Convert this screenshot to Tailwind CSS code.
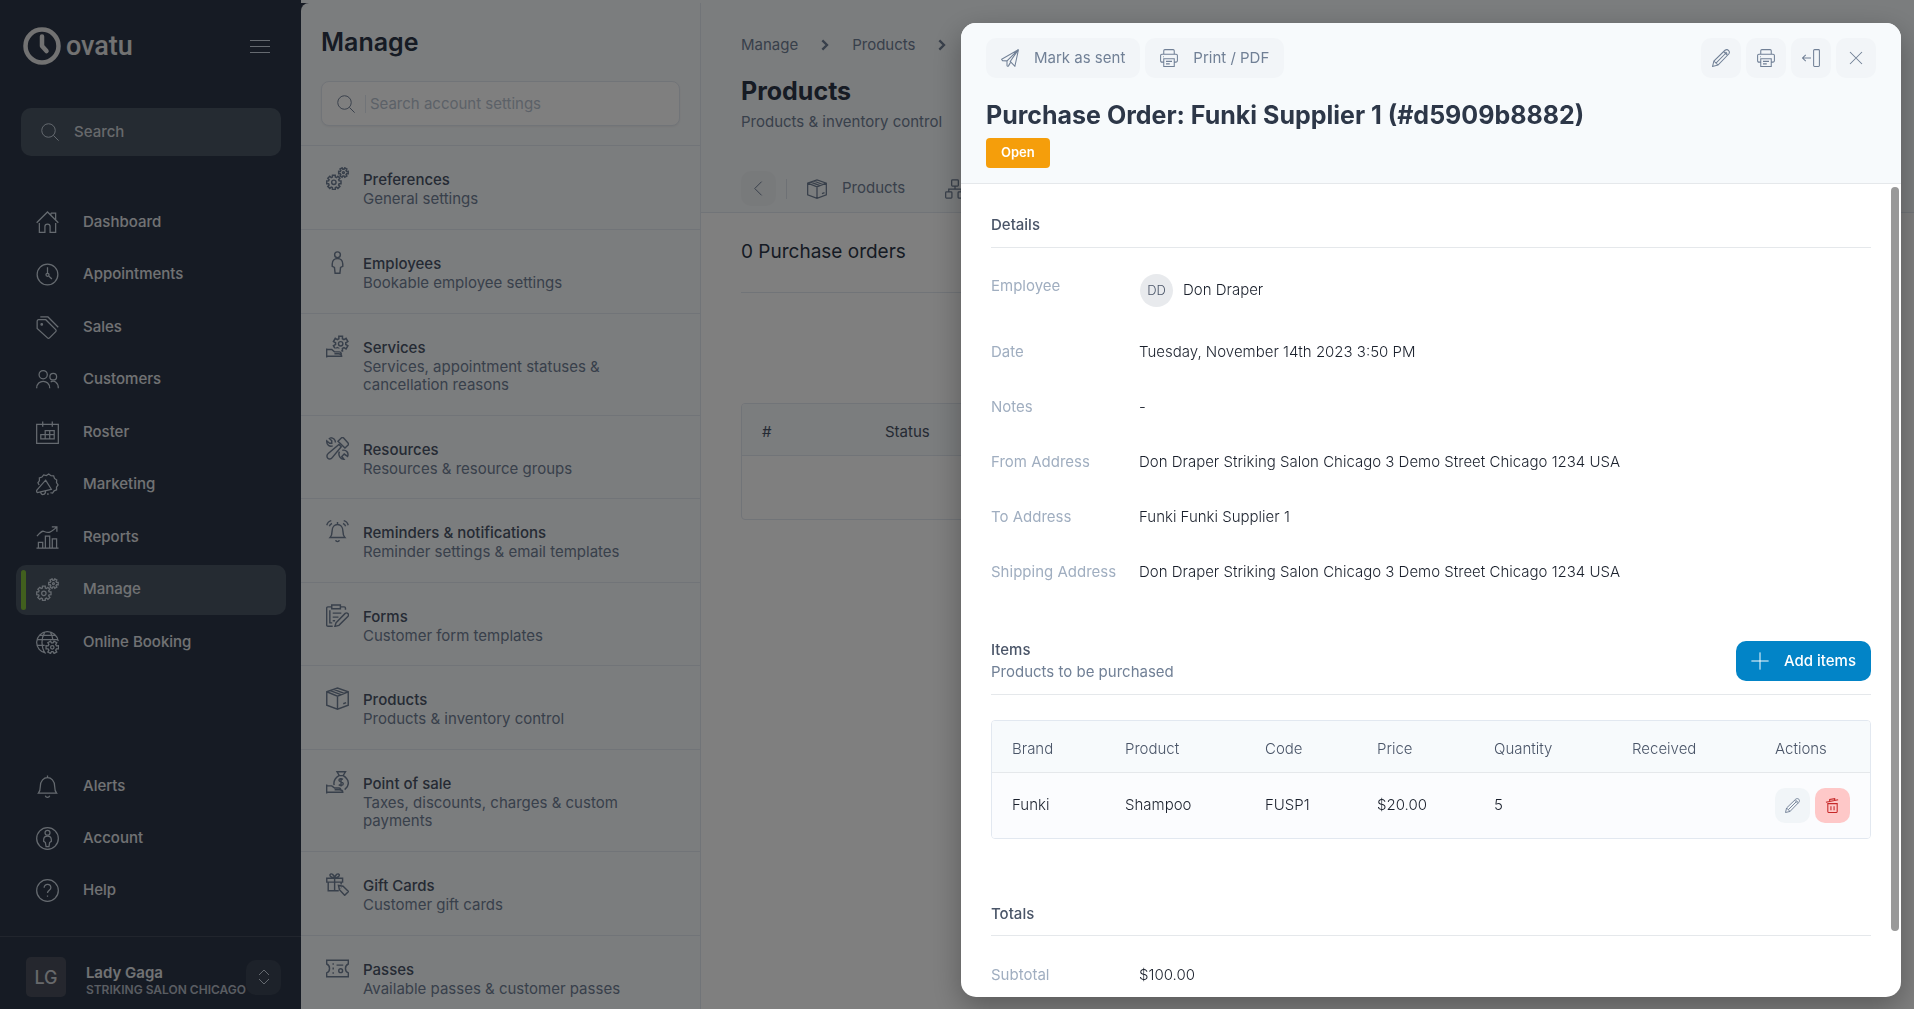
<!DOCTYPE html>
<html lang="en">
<head>
  <meta charset="UTF-8" />
  <meta name="viewport" content="width=device-width, initial-scale=1.0" />
  <title>Purchase Order - Ovatu</title>
  <script src="https://cdn.jsdelivr.net/npm/@tailwindcss/browser@4"></script>
</head>
<body class="flex h-screen overflow-hidden bg-[#2d3748] font-[Inter,sans-serif] text-[15px] text-[#4a5568]">

  <!-- icon sprite -->
  <svg class="hidden" aria-hidden="true">
    <defs>
      <path id="gear8" vector-effect="non-scaling-stroke" d="M5.77-1.65 7.85-1.53V1.53L5.77 1.65 5.25 2.91 6.63 4.47 4.47 6.63 2.91 5.25 1.65 5.77 1.53 7.85H-1.53L-1.65 5.77-2.91 5.25-4.47 6.63-6.63 4.47-5.25 2.91-5.77 1.65-7.85 1.53V-1.53L-5.77-1.65-5.25-2.91-6.63-4.47-4.47-6.63-2.91-5.25-1.65-5.77-1.53-7.85H1.53L1.65-5.77 2.91-5.25 4.47-6.63 6.63-4.47 5.25-2.91Z" />
      <path id="gear6" vector-effect="non-scaling-stroke" d="M5.17-1.88 7.76-1.94V1.94L5.17 1.88 4.21 3.54 5.56 5.75 2.2 7.69.96 5.42-.96 5.42-2.2 7.69-5.56 5.75-4.21 3.54-5.17 1.88-7.76 1.94V-1.94L-5.17-1.88-4.21-3.54-5.56-5.75-2.2-7.69-.96-5.42.96-5.42 2.2-7.69 5.56-5.75 4.21-3.54Z" />
    </defs>
    <symbol id="i-search" viewBox="0 0 24 24"><circle cx="10" cy="10" r="9" /><path d="m16.5 16.5 7 7" /></symbol>
    <symbol id="i-home" viewBox="0 0 24 24"><path d="M.7 12.3 12 1l11.300 11.300M3.500 12.500v9.800h5.800v-6c0-3.400 5.400-3.400 5.400 0v6h5.800v-9.800M15.500 2.300h5v6.800M15.500 2.300v2" /></symbol>
    <symbol id="i-clock" viewBox="0 0 24 24"><circle cx="12" cy="12" r="10.800" /><circle cx="12" cy="12.300" r="1.600" /><path d="M12 4.500v6M13.200 13.500l3.400 3.200" /></symbol>
    <symbol id="i-tags" viewBox="0 0 24 24"><path d="M1.200 5.500c0-1 .6-1.600 1.600-1.600h7.400l10.400 10.300c.6.6.6 1.500 0 2.100l-6.500 6.500c-.6.6-1.500.6-2.100 0L1.200 13zM4.500 1h8l10.700 10.800" /><circle cx="6" cy="8.800" r=".8" /></symbol>
    <symbol id="i-users" viewBox="0 0 24 24"><circle cx="7.500" cy="7" r="4.300" /><path d="M.7 21c0-9.500 13.600-9.500 13.600 0" /><circle cx="18" cy="9" r="3.500" /><path d="M15.300 14.600c3-2 8 0 8 6.400" /></symbol>
    <symbol id="i-roster" viewBox="0 0 24 24"><path d="M.7 3.500h22.600v19.800H.7zM7 .5V6M17 .5V6M5 14.300h14v4.400H5zM9.600 10h9.400v8.700H9.600zM14.300 10v8.700" /></symbol>
    <symbol id="i-marketing" viewBox="0 0 24 24"><path d="M3.300 12.500 2 10.300 3.600 8 3.500 5.200 6.200 4.200 8 2l2.800.6L13.300 1l2.300 1.800 2.800.2.900 2.700 2.300 1.600-.2 2.800L23 12.500l-1.600 2.300.1 2.800-2.600 1L17.300 21l-2.300-.4M10 7.500l6 9.500-14.500 3.500c-1.300-.8-.9-2.300-.4-2.900zM5 20c0 3.500 5 3.400 5-1.200M12.500 23l-.2-2" /></symbol>
    <symbol id="i-reports" viewBox="0 0 24 24"><path d="M.5 23.200h23M2.500 23v-6H7v6M9.800 23V10.500h4.500V23M17 23v-9.500h4.500V23M1 10.500c3-3.500 5-5.800 7.500-4.800 5 2 6.500 1.500 13-4.500M16.500 1h5.300v5" /></symbol>
    <symbol id="i-cogs" viewBox="0 0 24 24"><use href="#gear8" transform="translate(8.200 16) scale(.95)" /><circle cx="8.200" cy="16" r="2.300" /><use href="#gear6" transform="translate(18.200 5.800) scale(.64)" /><circle cx="18.200" cy="5.800" r="1" /></symbol>
    <symbol id="i-globe" viewBox="0 0 24 24"><path d="M10.500 23.200A11.300 11.300 0 1 1 23.200 10.500M1 9h21.500M1.200 15H9M4 4.500h16M9 1.200C5.500 8 5.500 16 9 22.800M15 1.200c1.500 2.500 2.200 5 2.500 7.500" /><use href="#gear6" transform="translate(17 17) scale(.84)" /><circle cx="17" cy="17" r="1.800" /></symbol>
    <symbol id="i-bell" viewBox="0 0 24 24"><path d="M12 .5v2.200M4.500 12c0-12.400 15-12.400 15 0 0 4 .8 5.500 2 7h-19c1.200-1.500 2-3 2-7zM9.700 21.700c.8 2.200 3.800 2.200 4.600 0" /></symbol>
    <symbol id="i-account" viewBox="0 0 24 24"><circle cx="12" cy="12" r="11.300" /><circle cx="12" cy="6" r="2.600" /><path d="M8 15v-1.500c0-5.300 8-5.300 8 0V15l-1.800 1.200-.7 4.300h-3l-.7-4.300z" /></symbol>
    <symbol id="i-help" viewBox="0 0 24 24"><circle cx="12" cy="12" r="11.300" /><path d="M8.500 9c0-4.500 7-4.300 7 0 0 2.700-3.500 2.700-3.500 5.600M12 17.300v1.200" /></symbol>
    <symbol id="i-person" viewBox="0 0 24 24"><circle cx="12" cy="3.900" r="3" /><path d="M6.500 16v-2.500C6.500 6 17.500 6 17.500 13.500V16l-2.300 1.200-.7 6h-5l-.7-6z" /></symbol>
    <symbol id="i-service" viewBox="0 0 24 24"><use href="#gear6" transform="translate(15.300 9) rotate(30) scale(.98)" /><circle cx="15.300" cy="9.200" r="2.300" /><path stroke="none" fill="#f7fafc" d="M0 14h15l3 9H0z" /><path d="M.7 14v9.500M.7 15.200H6l2.800 2.400H14c1.800 0 2.300 2.200 1.500 2.700M8.800 19.500H13c2 0 3.300 1.300 3.300 2.700H.7" /></symbol>
    <symbol id="i-tools" viewBox="0 0 24 24"><path d="M2.300 17.200 13.500 7.800l2.400 2.400L6.500 21.500c-1.500 2-3.500 1.800-4.600.7s-1.500-3.500.4-5zM12.500 4.500l3.700-3.700c.8-.5 1.600-.3 2.200.3L22.800 6c.7.800.7 2 0 2.700l-3 2.800zM3 1l3 3v2.500H3.800L.8 4C.3 8.500 4 10.500 7 9.300M9.800 5.800C10 3 7.500.5 4.500.8M14 15.300c-1.700 3.800 1 7.800 4.800 8l-2.300-3 2.500-2.500 3.500 2.500c1.700-4-2-7.600-5.500-6.300" /></symbol>
    <symbol id="i-ring" viewBox="0 0 24 24"><path d="M12 2v2.200M6.300 12c0-9.800 11.400-9.800 11.400 0 0 3.500.7 4.900 2 6.300H4.300c1.300-1.400 2-2.800 2-6.300zM10 21.200c.6 1.800 3.400 1.800 4 0M.8 5.500C1.500 3 3.200 1.200 5.500.7M3.500 6.500C4 5 5 4 6.300 3.600M23.200 5.500C22.500 3 20.800 1.200 18.500.7M20.500 6.500C20 5 19 4 17.700 3.600" /></symbol>
    <symbol id="i-forms" viewBox="0 0 24 24"><path d="M6 3H2C1.200 3 .7 3.500.7 4.300v17.600c0 .8.500 1.300 1.300 1.300h5M15 3h4c.8 0 1.300.5 1.300 1.300V6M6 1h9v4H6zM4 6.500v13.200h2.500M7 9.500h9M7 13.700h6M7 17.500h2.500M10.500 19.500 20 9.800c2-1.500 4.500.8 3 3l-9.500 9.500-4.200 1z" /></symbol>
    <symbol id="i-box" viewBox="0 0 24 24"><path d="M.8 5 12 1l11.200 4v14L12 23.200.8 19zM.8 5 12 9.500 23.200 5M12 9.500v13.700M4.500 3.700 15.500 8M8 2.400l11 4.200M18 17.500l3-1.200" /></symbol>
    <symbol id="i-money" viewBox="0 0 24 24"><path d="M11.500.8h8.800l-2.400 4h-4zM13.500 4.800c-4.500 3-6 6-5 10M18 4.800c6.500 4 7 10.500 1.500 14.700M17.700 8.800c-1.800-1.300-4.200-.8-4.200.9 0 2.200 4.500 1.200 4.500 3.600 0 2-2.900 2.300-4.700.9M15.700 7.300v9M.7 14v9.500M.7 15.500H6l3 2.300h4.500c1.500 0 2 1.200 1.500 2M9 19.500h5c2 0 3.500 1.200 3.500 2.700H.7" /></symbol>
    <symbol id="i-gift" viewBox="0 0 24 24"><path d="M.8 5.500h16.500v4H.8zM2.300 9.500v9h11M9 5.500v13M9 5.500C7.500 5 3.500 4 4.200 1.800 5.500-.5 8.500 2 9 5.500c.5-3.500 3.500-6 4.800-3.700C14.500 4 10.500 5 9 5.500M15.800 9.500V12M13 13l1 4.500 5.500 5.800 4-4-5.700-5.500zM15.500 15.500l.3.300" /></symbol>
    <symbol id="i-ticket" viewBox="0 0 24 24"><path d="M.7 3.300h22.600v4c-4 1.500-4 7.600 0 9.300v4H.7v-4c4-1.700 4-7.800 0-9.300zM7.500 6.500V8M7.500 11v2M7.500 16v1.500M11 8.500h7" /><circle cx="15.300" cy="14.300" r="2" /></symbol>
    <symbol id="i-sitemap" viewBox="0 0 24 24"><rect x="8" y="1" width="8" height="7.500" rx="1" /><rect x=".8" y="15.500" width="7.500" height="7.500" rx="1" /><rect x="15.700" y="15.500" width="7.500" height="7.500" rx="1" /><path d="M12 8.500V12M4.500 15.500V12h15v3.500" /></symbol>
    <symbol id="i-plane" viewBox="0 0 24 24"><path d="M23.300.7 18.500 23l-6.200-6.500L23.300.7.8 13.700 2 15.500l6 .3L23.300.7M8 15.800V22c0 1.200 1.300 1.500 2 .5l2.900-5" /></symbol>
    <symbol id="i-printer" viewBox="0 0 24 24"><path d="M5 17.500H2.500c-1 0-1.700-.7-1.700-1.700V8.700C.8 7.600 1.600 7 2.500 7h19c1 0 1.700.7 1.700 1.700v7.100c0 1-.7 1.700-1.700 1.700H19M5 7V2.300C5 1.300 5.700.8 6.500.8h11c.9 0 1.500.6 1.500 1.500V7M5 13h14v10.200H5zM8 16.500h8M8 19.800h5M4 10.200h1" /></symbol>
    <symbol id="i-pencil" viewBox="0 0 24 24"><path d="M.8 23.200 2.500 16 17.300 1.700c3.800-2.500 7.500 1.700 5 5L8 21.500zM2.500 16l5.500 5.500M15.500 3.500l5 5M18 3.800l2.300 2.300M5.300 18.700 18 6" /></symbol>
    <symbol id="i-dock" viewBox="0 0 24 24"><rect x="15.500" y=".8" width="7.700" height="22.400" rx="1.200" /><path d="M12 12H.8M5 7.800.8 12 5 16.200" /></symbol>
    <symbol id="i-close" viewBox="0 0 24 24"><path d="m4 4 16 16M20 4 4 20" /></symbol>
    <symbol id="i-plus" viewBox="0 0 24 24"><path d="M12 .5v23M.5 12h23" /></symbol>
    <symbol id="i-trash" viewBox="0 0 24 24"><path d="M4.500 9h15v12.500c0 1-.7 1.700-1.700 1.700H6.200c-1 0-1.700-.7-1.700-1.700zM9.500 13v6.500M14.500 13v6.500M1.500 6.700 21 2.700M7.500 5.300V2.500L15.500 1v2.600" /></symbol>
    <symbol id="i-left" viewBox="0 0 24 24"><path d="M17 1 6 12l11 11" /></symbol>
    <symbol id="i-right" viewBox="0 0 12 18"><path d="m2 2 7 7-7 7" /></symbol>
  </svg>

  <!-- sidebar -->
  <aside class="flex w-[301px] shrink-0 flex-col bg-[#2d3748] text-[#e2e5e8]">
    <div class="flex items-center justify-between pt-[26px] pr-[31px] pl-[22px]">
      <a href="#" class="flex items-center gap-1 text-[#e4e4e4]">
        <svg class="size-10" viewBox="0 0 40 40" fill="none" stroke="currentColor"><circle cx="20" cy="20" r="16.500" stroke-width="4.500" /><path d="M20 10.500v9.500l4.500 5" stroke-width="4.500" stroke-linecap="round" stroke-linejoin="round" /></svg>
        <span class="font-[Roboto,sans-serif] text-[27px] leading-10 font-medium">ovatu</span>
      </a>
      <button type="button" aria-label="Toggle menu" class="flex w-5 flex-col gap-[5px]">
        <span class="h-px w-full bg-[#cbd5e0]"></span>
        <span class="h-px w-full bg-[#cbd5e0]"></span>
        <span class="h-px w-full bg-[#cbd5e0]"></span>
      </button>
    </div>

    <label class="mr-5 ml-[21px] mt-[42px] flex h-12 items-center gap-[15px] rounded-[10px] bg-[#4a5664] pl-5">
      <svg class="size-[18px] shrink-0" fill="none" stroke="#cbd5e0" stroke-width="1.300"><use href="#i-search" /></svg>
      <input type="text" placeholder="Search" aria-label="Search" class="w-full bg-transparent font-medium outline-none placeholder:text-[#cfd3d8]" />
    </label>

    <nav class="mt-[41px] flex h-[470px] flex-col justify-between pr-[15px] pl-4 font-medium">
      <a href="#" class="flex h-[50px] items-center gap-6 rounded-[10px] pl-5"><svg class="size-[23px]" fill="none" stroke="#cbd5e0" stroke-width="1.300"><use href="#i-home" /></svg>Dashboard</a>
      <a href="#" class="flex h-[50px] items-center gap-6 rounded-[10px] pl-5"><svg class="size-[23px]" fill="none" stroke="#cbd5e0" stroke-width="1.300"><use href="#i-clock" /></svg>Appointments</a>
      <a href="#" class="flex h-[50px] items-center gap-6 rounded-[10px] pl-5"><svg class="size-[23px]" fill="none" stroke="#cbd5e0" stroke-width="1.300"><use href="#i-tags" /></svg>Sales</a>
      <a href="#" class="flex h-[50px] items-center gap-6 rounded-[10px] pl-5"><svg class="size-[23px]" fill="none" stroke="#cbd5e0" stroke-width="1.300"><use href="#i-users" /></svg>Customers</a>
      <a href="#" class="flex h-[50px] items-center gap-6 rounded-[10px] pl-5"><svg class="size-[23px]" fill="none" stroke="#cbd5e0" stroke-width="1.300"><use href="#i-roster" /></svg>Roster</a>
      <a href="#" class="flex h-[50px] items-center gap-6 rounded-[10px] pl-5"><svg class="size-[23px]" fill="none" stroke="#cbd5e0" stroke-width="1.300"><use href="#i-marketing" /></svg>Marketing</a>
      <a href="#" class="flex h-[50px] items-center gap-6 rounded-[10px] pl-5"><svg class="size-[23px]" fill="none" stroke="#cbd5e0" stroke-width="1.300"><use href="#i-reports" /></svg>Reports</a>
      <a href="#" aria-current="page" class="flex h-[50px] items-center rounded-[10px] bg-[#4a5664] pl-[5px]"><span class="mr-[10px] h-10 w-[5px] rounded-[3px] bg-[#82be3c]"></span><svg class="mr-6 size-[23px]" fill="none" stroke="#cbd5e0" stroke-width="1.300"><use href="#i-cogs" /></svg>Manage</a>
      <a href="#" class="flex h-[50px] items-center gap-6 rounded-[10px] pl-5"><svg class="size-[23px]" fill="none" stroke="#cbd5e0" stroke-width="1.300"><use href="#i-globe" /></svg>Online Booking</a>
    </nav>

    <nav class="mt-auto mb-[21px] flex flex-col gap-[2px] pr-[15px] pl-4 font-medium">
      <a href="#" class="flex h-[50px] items-center gap-6 pl-5"><svg class="size-[23px]" fill="none" stroke="#cbd5e0" stroke-width="1.300"><use href="#i-bell" /></svg>Alerts</a>
      <a href="#" class="flex h-[50px] items-center gap-6 pl-5"><svg class="size-[23px]" fill="none" stroke="#cbd5e0" stroke-width="1.300"><use href="#i-account" /></svg>Account</a>
      <a href="#" class="flex h-[50px] items-center gap-6 pl-5"><svg class="size-[23px]" fill="none" stroke="#cbd5e0" stroke-width="1.300"><use href="#i-help" /></svg>Help</a>
    </nav>

    <div class="flex h-[73px] shrink-0 items-center border-t border-[#434b5b] pt-2 pr-5 pl-[26px]">
      <span class="flex size-10 items-center justify-center rounded-[5px] bg-[#4a4f5c] text-[18px] font-medium text-[#cfd2d6]">LG</span>
      <div class="ml-5 grow pt-[7px] whitespace-nowrap">
        <p class="leading-[19px] font-semibold">Lady Gaga</p>
        <p class="text-[12px] leading-4 font-semibold text-[#b4bac4]">STRIKING SALON CHICAGO</p>
      </div>
      <button type="button" aria-label="Switch account" class="flex size-[35px] shrink-0 items-center justify-center rounded-[10px] bg-[#3b4454]">
        <svg class="h-4 w-3" viewBox="0 0 12 16" fill="none" stroke="#cbd5e0"><path d="m1 6 5-5 5 5M1 10l5 5 5-5" /></svg>
      </button>
    </div>
  </aside>

  <div class="flex min-w-0 grow flex-col">
    <div class="h-[3px] shrink-0 bg-[#f7fafc]"></div>
    <div class="flex min-h-0 grow">

      <!-- settings list -->
      <section class="flex w-[400px] shrink-0 flex-col overflow-hidden rounded-tl-[8px] border-r border-[#e2e8f0] bg-[#f7fafc]">
        <h1 class="pt-[23px] pl-5 text-[25px] leading-8 font-semibold text-[#2d3748]">Manage</h1>
        <label class="mx-5 mt-[23px] flex h-[45px] shrink-0 items-center rounded-[8px] border border-[#e2e8f0] bg-white pl-[15px] shadow-xs">
          <svg class="size-[18px] shrink-0" fill="none" stroke="#718096" stroke-width="1.300"><use href="#i-search" /></svg>
          <span class="ml-[10px] h-[18px] w-px bg-[#e2e8f0]"></span>
          <input type="text" placeholder="Search account settings" aria-label="Search account settings" class="ml-1 w-full bg-transparent pt-px outline-none placeholder:text-[#b9c3d0]" />
        </label>
        <ul class="mt-[19px]">
          <li><a href="#" class="flex gap-[14px] border-t border-[#e2e8f0] pt-[21px] pr-5 pb-[21px] pl-[25px]"><svg class="size-[23px] shrink-0" fill="none" stroke="#718096" stroke-width="1.500"><use href="#i-cogs" /></svg><span class="pt-[3px]"><span class="block leading-[20px] font-medium">Preferences</span><span class="block leading-[18px] text-[#718096]">General settings</span></span></a></li>
          <li><a href="#" class="flex gap-[14px] border-t border-[#e2e8f0] pt-[21px] pr-5 pb-[21px] pl-[25px]"><svg class="size-[23px] shrink-0" fill="none" stroke="#718096" stroke-width="1.500"><use href="#i-person" /></svg><span class="pt-[3px]"><span class="block leading-[20px] font-medium">Employees</span><span class="block leading-[18px] text-[#718096]">Bookable employee settings</span></span></a></li>
          <li><a href="#" class="flex gap-[14px] border-t border-[#e2e8f0] pt-[21px] pr-5 pb-[21px] pl-[25px]"><svg class="size-[23px] shrink-0" fill="none" stroke="#718096" stroke-width="1.500"><use href="#i-service" /></svg><span class="pt-[3px]"><span class="block leading-[20px] font-medium">Services</span><span class="block leading-[18px] text-[#718096]">Services, appointment statuses &amp; cancellation reasons</span></span></a></li>
          <li><a href="#" class="flex gap-[14px] border-t border-[#e2e8f0] pt-[21px] pr-5 pb-[20px] pl-[25px]"><svg class="size-[23px] shrink-0" fill="none" stroke="#718096" stroke-width="1.500"><use href="#i-tools" /></svg><span class="pt-[3px]"><span class="block leading-[20px] font-medium">Resources</span><span class="block leading-[18px] text-[#718096]">Resources &amp; resource groups</span></span></a></li>
          <li><a href="#" class="flex gap-[14px] border-t border-[#e2e8f0] pt-[21px] pr-5 pb-[21px] pl-[25px]"><svg class="size-[23px] shrink-0" fill="none" stroke="#718096" stroke-width="1.500"><use href="#i-ring" /></svg><span class="pt-[3px]"><span class="block leading-[20px] font-medium">Reminders &amp; notifications</span><span class="block leading-[18px] text-[#718096]">Reminder settings &amp; email templates</span></span></a></li>
          <li><a href="#" class="flex gap-[14px] border-t border-[#e2e8f0] pt-[21px] pr-5 pb-[20px] pl-[25px]"><svg class="size-[23px] shrink-0" fill="none" stroke="#718096" stroke-width="1.500"><use href="#i-forms" /></svg><span class="pt-[3px]"><span class="block leading-[20px] font-medium">Forms</span><span class="block leading-[18px] text-[#718096]">Customer form templates</span></span></a></li>
          <li><a href="#" class="flex gap-[14px] border-t border-[#e2e8f0] pt-[21px] pr-5 pb-[21px] pl-[25px]"><svg class="size-[23px] shrink-0" fill="none" stroke="#718096" stroke-width="1.500"><use href="#i-box" /></svg><span class="pt-[3px]"><span class="block leading-[20px] font-medium">Products</span><span class="block leading-[18px] text-[#718096]">Products &amp; inventory control</span></span></a></li>
          <li><a href="#" class="flex gap-[14px] border-t border-[#e2e8f0] pt-[21px] pr-5 pb-[21px] pl-[25px]"><svg class="size-[23px] shrink-0" fill="none" stroke="#718096" stroke-width="1.500"><use href="#i-money" /></svg><span class="pt-[3px]"><span class="block leading-[20px] font-medium">Point of sale</span><span class="block leading-[18px] text-[#718096]">Taxes, discounts, charges &amp; custom payments</span></span></a></li>
          <li><a href="#" class="flex gap-[14px] border-t border-[#e2e8f0] pt-[21px] pr-5 pb-[21px] pl-[25px]"><svg class="size-[23px] shrink-0" fill="none" stroke="#718096" stroke-width="1.500"><use href="#i-gift" /></svg><span class="pt-[3px]"><span class="block leading-[20px] font-medium">Gift Cards</span><span class="block leading-[18px] text-[#718096]">Customer gift cards</span></span></a></li>
          <li><a href="#" class="flex gap-[14px] border-t border-[#e2e8f0] pt-[21px] pr-5 pb-[21px] pl-[25px]"><svg class="size-[23px] shrink-0" fill="none" stroke="#718096" stroke-width="1.500"><use href="#i-ticket" /></svg><span class="pt-[3px]"><span class="block leading-[20px] font-medium">Passes</span><span class="block leading-[18px] text-[#718096]">Available passes &amp; customer passes</span></span></a></li>
        </ul>
      </section>

      <!-- products page -->
      <main class="min-w-0 grow bg-white">
        <header class="border-b border-[#e2e8f0] bg-[#f7fafc] px-10 pt-8 pb-[6px]">
          <nav aria-label="Breadcrumb" class="flex items-center gap-[23px] leading-5 text-[#718096]">
            <a href="#">Manage</a>
            <svg class="h-3 w-2" fill="none" stroke="currentColor" stroke-width="3.500"><use href="#i-right" /></svg>
            <a href="#">Products</a>
            <svg class="h-3 w-2" fill="none" stroke="currentColor" stroke-width="3.500"><use href="#i-right" /></svg>
          </nav>
          <h2 class="mt-5 text-[25px] leading-8 font-bold text-[#2d3748]">Products</h2>
          <p class="mt-[5px] leading-5 text-[#718096]">Products &amp; inventory control</p>
          <div class="mt-[39px] flex h-[35px] items-center text-[#718096]">
            <button type="button" aria-label="Back" class="flex size-[35px] items-center justify-center rounded-[10px] bg-[#f1f4f7]"><svg class="size-[15px]" fill="none" stroke="currentColor" stroke-width="1.600"><use href="#i-left" /></svg></button>
            <span class="ml-[10px] h-5 w-px bg-[#dde3ea]"></span>
            <a href="#" class="ml-5 flex items-center gap-[15px]"><svg class="size-5" fill="none" stroke="currentColor" stroke-width="1.500"><use href="#i-box" /></svg>Products</a>
            <a href="#" aria-label="Categories" class="ml-10"><svg class="size-5" fill="none" stroke="currentColor" stroke-width="1.500"><use href="#i-sitemap" /></svg></a>
          </div>
        </header>
        <div class="px-10">
          <h3 class="border-b border-[#e2e8f0] pt-[26px] pb-[27px] text-[19px] leading-[26px] text-[#2d3748]">0 Purchase orders</h3>
          <div class="mt-[110px] overflow-hidden rounded-[4px] border border-[#e2e8f0]">
            <table class="w-full table-fixed text-left">
              <thead class="bg-[#f7fafc]">
                <tr class="h-[51px] border-b border-[#e2e8f0]">
                  <th class="w-[123px] px-5 pt-[6px] font-normal">#</th>
                  <th class="px-5 pt-[6px] font-normal">Status</th>
                </tr>
              </thead>
              <tbody>
                <tr class="h-16"><td colspan="2"></td></tr>
              </tbody>
            </table>
          </div>
        </div>
      </main>
    </div>
  </div>

  <div class="fixed inset-0 bg-black/50"></div>

  <!-- purchase order drawer -->
  <div role="dialog" aria-labelledby="po-title" class="fixed top-[23px] right-[13px] bottom-3 flex w-1/2 max-w-[940px] flex-col overflow-hidden rounded-[15px] bg-white shadow-[0_10px_30px_rgba(0,0,0,0.3)]">
    <header class="border-b border-[#e5e8eb] bg-[#f7fafc] px-[25px] py-[15px]">
      <div class="flex gap-[5px] text-[#718096]">
        <button type="button" class="flex h-10 items-center gap-[15px] rounded-[10px] bg-[#f2f5f8] px-[15px]"><svg class="size-[18px]" fill="none" stroke="currentColor" stroke-width="1.400"><use href="#i-plane" /></svg>Mark as sent</button>
        <button type="button" class="flex h-10 items-center gap-[15px] rounded-[10px] bg-[#f2f5f8] px-[15px]"><svg class="size-[18px]" fill="none" stroke="currentColor" stroke-width="1.400"><use href="#i-printer" /></svg>Print / PDF</button>
        <button type="button" aria-label="Edit" class="ml-auto flex size-10 items-center justify-center rounded-[10px] bg-[#f2f5f8]"><svg class="size-[18px]" fill="none" stroke="currentColor" stroke-width="1.400"><use href="#i-pencil" /></svg></button>
        <button type="button" aria-label="Print" class="flex size-10 items-center justify-center rounded-[10px] bg-[#f2f5f8]"><svg class="size-[18px]" fill="none" stroke="currentColor" stroke-width="1.400"><use href="#i-printer" /></svg></button>
        <button type="button" aria-label="Dock" class="flex size-10 items-center justify-center rounded-[10px] bg-[#f2f5f8]"><svg class="size-[18px]" fill="none" stroke="currentColor" stroke-width="1.400"><use href="#i-dock" /></svg></button>
        <button type="button" aria-label="Close" class="flex size-10 items-center justify-center rounded-[10px] bg-[#f2f5f8]"><svg class="size-[18px]" fill="none" stroke="currentColor" stroke-width="1.400"><use href="#i-close" /></svg></button>
      </div>
      <h2 id="po-title" class="mt-[18px] text-[25px] leading-[38px] font-bold text-[#2d3748]">Purchase Order: Funki Supplier 1 (#d5909b8882)</h2>
      <span class="mt-1 inline-flex h-[30px] items-center rounded-[4px] bg-[#f59e0b] px-[15px] align-top text-[13px] font-semibold text-white">Open</span>
    </header>

    <div class="relative min-h-0 grow overflow-hidden px-[30px] pt-[30px]">
      <h3 class="border-b border-[#e5e8eb] pb-[11px] leading-[22px] font-medium">Details</h3>
      <dl class="mt-[26px] grid grid-cols-[148px_1fr]">
        <dt class="mb-[17px] pt-[2px] leading-5 text-[#a0aec0]">Employee</dt>
        <dd class="mb-[17px] flex items-center gap-[10px] font-light text-[#1a202c]"><span class="ml-px flex size-[33px] items-center justify-center rounded-full bg-[#e8eaed] text-[13px] text-[#4a5568]">DD</span>Don Draper</dd>
        <dt class="py-[15px] leading-[25px] text-[#a0aec0]">Date</dt>
        <dd class="py-[15px] leading-[25px] font-light text-[#1a202c]">Tuesday, November 14th 2023 3:50 PM</dd>
        <dt class="py-[15px] leading-[25px] text-[#a0aec0]">Notes</dt>
        <dd class="py-[15px] leading-[25px] font-light text-[#1a202c]">-</dd>
        <dt class="py-[15px] leading-[25px] text-[#a0aec0]">From Address</dt>
        <dd class="py-[15px] leading-[25px] font-light text-[#1a202c]">Don Draper Striking Salon Chicago 3 Demo Street Chicago 1234 USA</dd>
        <dt class="py-[15px] leading-[25px] text-[#a0aec0]">To Address</dt>
        <dd class="py-[15px] leading-[25px] font-light text-[#1a202c]">Funki Funki Supplier 1</dd>
        <dt class="py-[15px] leading-[25px] text-[#a0aec0]">Shipping Address</dt>
        <dd class="py-[15px] leading-[25px] font-light text-[#1a202c]">Don Draper Striking Salon Chicago 3 Demo Street Chicago 1234 USA</dd>
      </dl>

      <div class="mt-10 flex items-start justify-between border-b border-[#e5e8eb] pb-[11px]">
        <div>
          <h3 class="leading-[22px] font-medium">Items</h3>
          <p class="leading-[22px] text-[#718096]">Products to be purchased</p>
        </div>
        <button type="button" class="mt-[2px] flex h-10 items-center gap-[15px] rounded-[10px] bg-[#0284c7] px-[15px] font-medium text-white"><svg class="size-[18px]" fill="none" stroke="currentColor" stroke-width="1.300"><use href="#i-plus" /></svg>Add items</button>
      </div>

      <div class="mt-[25px] overflow-hidden rounded-[4px] border border-[#e2e8f0]">
        <table class="w-full table-fixed text-left">
          <colgroup>
            <col class="w-[113px]" /><col class="w-[140px]" /><col class="w-[112px]" /><col class="w-[117px]" /><col class="w-[138px]" /><col class="w-[143px]" /><col class="w-[115px]" />
          </colgroup>
          <thead class="bg-[#f7fafc]">
            <tr class="h-[51px] border-b border-[#e5e8eb]">
              <th class="pt-[6px] pl-5 font-light">Brand</th>
              <th class="pt-[6px] pl-5 font-light">Product</th>
              <th class="pt-[6px] pl-5 font-light">Code</th>
              <th class="pt-[6px] pl-5 font-light">Price</th>
              <th class="pt-[6px] pl-5 font-light">Quantity</th>
              <th class="pt-[6px] pl-5 font-light">Received</th>
              <th class="pt-[6px] pl-5 font-light">Actions</th>
            </tr>
          </thead>
          <tbody class="bg-[#fbfcfe] font-light text-[#1a202c]">
            <tr>
              <td class="pl-5">Funki</td>
              <td class="pl-5">Shampoo</td>
              <td class="pl-5">FUSP1</td>
              <td class="pl-5">$20.00</td>
              <td class="pl-5">5</td>
              <td class="pl-5"></td>
              <td class="py-[15px] pl-5">
                <div class="flex gap-[5px]">
                  <button type="button" aria-label="Edit item" class="flex size-[35px] items-center justify-center rounded-[10px] bg-[#f1f5f8] text-[#718096]"><svg class="size-[15px]" fill="none" stroke="currentColor" stroke-width="1.500"><use href="#i-pencil" /></svg></button>
                  <button type="button" aria-label="Delete item" class="flex size-[35px] items-center justify-center rounded-[10px] bg-[#fec8c8] text-[#c62828]"><svg class="size-[15px]" fill="none" stroke="currentColor" stroke-width="1.700"><use href="#i-trash" /></svg></button>
                </div>
              </td>
            </tr>
          </tbody>
        </table>
      </div>

      <h3 class="mt-16 border-b border-[#e5e8eb] pb-[10px] leading-[22px] font-medium">Totals</h3>
      <dl class="mt-[11px] grid grid-cols-[148px_1fr]">
        <dt class="py-[15px] leading-[25px] text-[#a0aec0]">Subtotal</dt>
        <dd class="py-[15px] leading-[25px] font-light text-[#1a202c]">$100.00</dd>
      </dl>

      <!-- scroll thumb -->
      <div class="absolute top-[3px] right-[2px] bottom-[66px] w-2 rounded-full bg-[#999999]"></div>
    </div>
  </div>

</body>
</html>
